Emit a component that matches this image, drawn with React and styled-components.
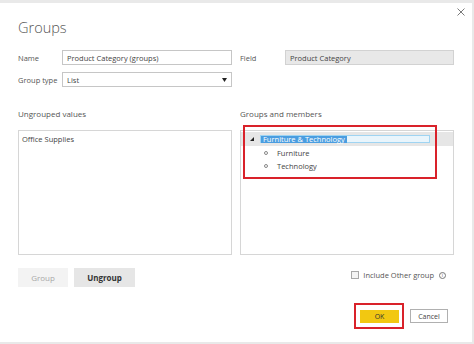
import React from 'react'
import styled, {createGlobalStyle} from 'styled-components'

const Global = createGlobalStyle`
  html, body {
    margin: 0;
    padding: 0;
    background: #fff;
  }
  body {
    font-family: "Open Sans", "Noto Sans", sans-serif;
  }
`

export default function App() {
  return (
    <Frame>
      <Global />
      <Dialog>
        <CloseBtn aria-label="close">
          <svg width="8" height="8" viewBox="0 0 8 8">
            <path d="M0.5 0.5 L7.5 7.5 M7.5 0.5 L0.5 7.5" stroke="#7a7a7a" strokeWidth="1" />
          </svg>
        </CloseBtn>
        <Title>Groups</Title>

        <FormGrid>
          <Label>Name</Label>
          <TextBox>Product Category (groups)</TextBox>
          <Label indent>Field</Label>
          <TextBox readOnly>Product Category</TextBox>
          <Label>Group type</Label>
          <TextBox>
            List
            <svg width="5" height="4" viewBox="0 0 5 4">
              <polygon points="0,0 5,0 2.5,4" fill="#222" />
            </svg>
          </TextBox>
        </FormGrid>

        <Columns>
          <Column>
            <SectionLabel>Ungrouped values</SectionLabel>
            <ListBox>
              <PlainItem>Office Supplies</PlainItem>
            </ListBox>
            <ButtonRow>
              <SideButton disabled>Group</SideButton>
              <SideButton wide>Ungroup</SideButton>
            </ButtonRow>
          </Column>
          <Column>
            <SectionLabel>Groups and members</SectionLabel>
            <ListBox>
              <GroupRow>
                <svg width="4" height="4" viewBox="0 0 4 4">
                  <polygon points="4,0 4,4 0,4" fill="#222" />
                </svg>
                <EditBox>
                  <Selected>Furniture &amp; Technology</Selected>
                </EditBox>
              </GroupRow>
              <Member>Furniture</Member>
              <Member>Technology</Member>
              <Highlight />
            </ListBox>
            <CheckRow>
              <CheckBox />
              <span>Include Other group</span>
              <InfoIcon>i</InfoIcon>
            </CheckRow>
          </Column>
        </Columns>

        <Footer>
          <Marked>
            <OkButton>OK</OkButton>
          </Marked>
          <CancelButton>Cancel</CancelButton>
        </Footer>
      </Dialog>
    </Frame>
  )
}

const Frame = styled.div`
  width: 474px;
  height: 344px;
  box-sizing: border-box;
  padding: 3px 2px 2px 0;
  background: #e9e9e9;
`

const Dialog = styled.div`
  position: relative;
  height: 339px;
  background: #fff;
  box-sizing: border-box;
  padding: 15px 18px 0 18px;
  color: #333;
  font-size: 7.5px;
`

const CloseBtn = styled.div`
  position: absolute;
  top: 5px;
  right: 7px;
  display: flex;
`

const Title = styled.div`
  font-size: 14.5px;
  font-weight: 300;
  color: #555;
  line-height: 20px;
  height: 20px;
`

const FormGrid = styled.div`
  display: grid;
  grid-template-columns: 44px 170px 53px 169px;
  grid-auto-rows: 15px;
  row-gap: 7px;
  margin-top: 12px;
  align-items: center;
`

const Label = styled.div`
  color: #555;
  padding-left: ${p => (p.indent ? '8px' : '0')};
`

const TextBox = styled.div`
  height: 15px;
  box-sizing: border-box;
  border: 1px solid ${p => (p.readOnly ? '#d2d2d2' : '#c6c6c6')};
  background: ${p => (p.readOnly ? '#e8e8e8' : '#fff')};
  padding: 0 4px 0 4px;
  display: flex;
  align-items: center;
  justify-content: space-between;
  color: #444;
`

const Columns = styled.div`
  display: grid;
  grid-template-columns: 214px 214px;
  column-gap: 8px;
  margin-top: 21px;
`

const Column = styled.div`
  display: flex;
  flex-direction: column;
`

const SectionLabel = styled.div`
  color: #555;
  font-size: 8px;
  line-height: 12px;
  height: 12px;
`

const ListBox = styled.div`
  position: relative;
  margin-top: 10px;
  height: 125px;
  box-sizing: border-box;
  border: 1px solid #d6d6d6;
  padding-top: 1px;
`

const PlainItem = styled.div`
  padding: 2px 3px;
  color: #444;
`

const GroupRow = styled.div`
  height: 14px;
  background: #e6e6e6;
  display: flex;
  align-items: center;
  gap: 6px;
  padding-left: 9px;
  box-sizing: border-box;
`

const EditBox = styled.div`
  width: 170px;
  height: 8px;
  box-sizing: border-box;
  border: 1px solid #9fd4f2;
  background: #e9f5fc;
  display: flex;
  align-items: center;
`

const Selected = styled.span`
  background: #4a9de0;
  color: #fff;
  line-height: 7px;
  padding: 0 2px;
`

const Member = styled.div`
  display: flex;
  align-items: center;
  gap: 9px;
  padding-left: 23px;
  height: 13px;
  color: #444;

  &::before {
    content: '';
    width: 2px;
    height: 2px;
    border: 1px solid #888;
    border-radius: 50%;
  }
`

const Highlight = styled.div`
  position: absolute;
  left: 2px;
  top: -6px;
  width: 194px;
  height: 54px;
  box-sizing: border-box;
  border: 2px solid #d9222a;
`

const ButtonRow = styled.div`
  display: flex;
  gap: 6px;
  margin-top: 13px;
`

const SideButton = styled.div`
  width: ${p => (p.wide ? '61px' : '50px')};
  height: 19px;
  display: flex;
  align-items: center;
  justify-content: center;
  font-size: 8px;
  font-weight: ${p => (p.disabled ? 400 : 700)};
  background: ${p => (p.disabled ? '#f3f3f3' : '#e6e6e6')};
  color: ${p => (p.disabled ? '#a8a8a8' : '#333')};
`

const CheckRow = styled.div`
  display: flex;
  align-items: center;
  justify-content: flex-end;
  gap: 3px;
  margin-top: 15px;
  padding-right: 8px;
  color: #555;
`

const CheckBox = styled.span`
  width: 8px;
  height: 8px;
  box-sizing: border-box;
  border: 1px solid #a8a8a8;
  background: #f4f4f4;
  margin-right: 1px;
`

const InfoIcon = styled.span`
  width: 7px;
  height: 7px;
  box-sizing: border-box;
  border: 1px solid #777;
  border-radius: 50%;
  font-size: 5px;
  line-height: 5px;
  display: flex;
  align-items: center;
  justify-content: center;
  margin-left: 2px;
  color: #666;
`

const Footer = styled.div`
  display: flex;
  justify-content: flex-end;
  align-items: center;
  gap: 6px;
  margin-top: 16px;
  padding-right: 6px;
`

const Marked = styled.div`
  border: 2px solid #d9222a;
  padding: 5px 3px 4px 4px;
  display: flex;
`

const OkButton = styled.div`
  width: 39px;
  height: 13px;
  background: #f2c811;
  display: flex;
  align-items: center;
  justify-content: center;
  font-size: 7px;
  color: #333;
`

const CancelButton = styled.div`
  width: 38px;
  height: 14px;
  box-sizing: border-box;
  border: 1px solid #b0b0b0;
  background: #fff;
  display: flex;
  align-items: center;
  justify-content: center;
  font-size: 7px;
  color: #444;
`
